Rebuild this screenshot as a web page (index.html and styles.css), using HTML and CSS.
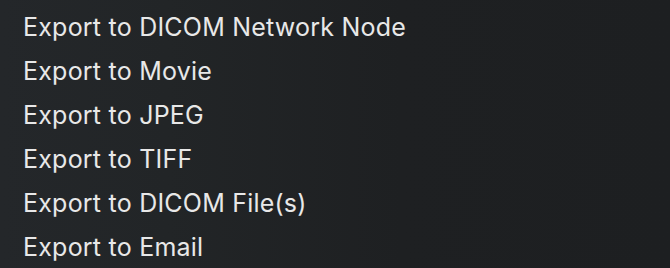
FILE: index.html
```html
<!DOCTYPE html>
<html>
<head>
<meta charset="utf-8">
<link rel="stylesheet" href="styles.css">
</head>
<body>
<ul class="menu">
  <li class="item">Export to DICOM Network Node</li>
  <li class="item">Export to Movie</li>
  <li class="item">Export to JPEG</li>
  <li class="item">Export to TIFF</li>
  <li class="item">Export to DICOM File(s)</li>
  <li class="item">Export to Email</li>
</ul>
</body>
</html>
```
FILE: styles.css
```css
html, body {
  margin: 0;
  padding: 0;
  width: 670px;
  height: 268px;
  overflow: hidden;
}
body {
  background: linear-gradient(to right, #24272a 0%, #222527 25%, #1e2022 60%, #1d1f21 100%);
  font-family: Inter, "Noto Sans", sans-serif;
  color: #e8e8e8;
}
.menu {
  list-style: none;
  margin: 0;
  padding: 5px 0 0 23px;
  display: flex;
  flex-direction: column;
}
.item {
  height: 44px;
  line-height: 44px;
  font-size: 25px;
  letter-spacing: 0.22px;
}
```
